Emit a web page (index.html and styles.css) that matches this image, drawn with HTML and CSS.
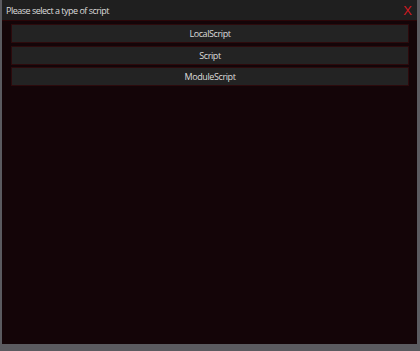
FILE: index.html
```html
<!DOCTYPE html>
<html>
<head>
<meta charset="utf-8">
<link rel="stylesheet" href="styles.css">
</head>
<body>
<div class="window">
  <div class="titlebar">
    <span class="title">Please select a type of script</span>
    <span class="close">X</span>
  </div>
  <div class="content">
    <div class="option">LocalScript</div>
    <div class="option">Script</div>
    <div class="option">ModuleScript</div>
  </div>
</div>
</body>
</html>
```
FILE: styles.css
```css
html, body {
  margin: 0;
  padding: 0;
  width: 420px;
  height: 351px;
  overflow: hidden;
  background: #5b5b60;
}
.window {
  margin-left: 2px;
  width: 415px;
  height: 344px;
  display: flex;
  flex-direction: column;
  font-family: "Open Sans", "Noto Sans", sans-serif;
}
.titlebar {
  height: 20px;
  flex: 0 0 20px;
  background: #1f1f1f;
  display: flex;
  align-items: center;
  justify-content: space-between;
  padding: 0 5px 0 4px;
  color: #dcdcdc;
}
.title {
  font-size: 9px;
  letter-spacing: -0.5px;
}
.close {
  color: #d21a22;
  font-family: "Liberation Sans", sans-serif;
  font-size: 13px;
  line-height: 1;
}
.content {
  flex: 1;
  background: #140508;
  border-top: 1px solid #2a0608;
  padding: 3px 8px 0 9px;
  display: flex;
  flex-direction: column;
  gap: 2.5px;
}
.option {
  height: 17px;
  background: #232323;
  border: 1px solid #2c0a0c;
  color: #dcdcdc;
  font-size: 9px;
  letter-spacing: -0.4px;
  display: flex;
  align-items: center;
  justify-content: center;
}
```
